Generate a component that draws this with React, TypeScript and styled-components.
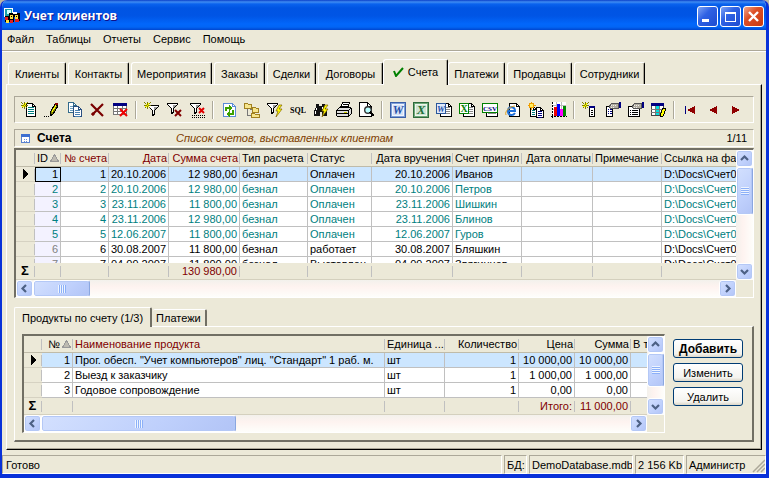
import React from 'react';
import styled, { createGlobalStyle, css } from 'styled-components';

const face = '#ece9d8';
const shade = '#aca899';
const dark = '#716f64';
const line = '#c0c0c0';
const maroon = '#800000';
const teal = '#008080';

const Global = createGlobalStyle`
  * { box-sizing: border-box; }
  body {
    margin: 0;
    background: #b9b5a4;
    font-family: "Liberation Sans", Arial, sans-serif;
    font-size: 11px;
    line-height: 14px;
    color: #000;
  }
  button { font: inherit; color: inherit; }
`;

const Window = styled.div`
  display: flex;
  flex-direction: column;
  min-height: 100vh;
  background: ${face};
  border: solid #0831d9;
  border-width: 0 3px 4px 2px;
  border-radius: 7px 7px 0 0;
  overflow: hidden;
`;

const TitleBar = styled.header`
  display: flex;
  align-items: center;
  gap: 4px;
  height: 30px;
  margin: 0 -3px 0 -2px;
  padding: 2px 5px 0 4px;
  background: linear-gradient(#0a3fc9 0, #3f8cf3 2px, #0a62ee 4px, #0054e3 8px, #0055e5 16px, #0267fb 24px, #0265f5 27px, #0046cf 30px);
`;

const Title = styled.h1`
  flex: 1;
  margin: 0;
  color: #fff;
  font: bold 12px/18px "Open Sans", "Noto Sans", sans-serif;
  text-shadow: 1px 1px 0 #0f1089;
`;

const Controls = styled.div`
  display: flex;
  gap: 2px;
`;

const ControlButton = styled.button<{ $close?: boolean }>`
  display: flex;
  width: 21px;
  height: 21px;
  padding: 0;
  border: 1px solid #fff;
  border-radius: 3px;
  background: ${p => (p.$close
    ? 'linear-gradient(135deg, #f0a58c, #dd4f26 40%, #c93a10)'
    : 'linear-gradient(135deg, #7fa4f5, #2f62e4 40%, #1d4bd0)')};
`;

const MenuBar = styled.nav`
  display: flex;
  gap: 12px;
  height: 22px;
  padding: 2px 5px 0;
  border-bottom: 1px solid #fff;
  box-shadow: inset 0 -1px ${shade};
`;

const MenuItem = styled.button`
  height: 14px;
  padding: 0;
  border: 0;
  background: none;
  font-size: 11px;
`;

const Tabs = styled.div`
  display: flex;
  align-items: flex-end;
  gap: 2px;
  height: 26px;
  margin: 6px 4px 0 6px;
`;

const Tab = styled.button<{ $w: number; $active?: boolean }>`
  display: flex;
  align-items: center;
  justify-content: center;
  gap: 4px;
  flex: 0 1 ${p => p.$w}px;
  height: 22px;
  padding: 0;
  white-space: nowrap;
  background: ${face};
  border: solid #fff;
  border-width: 1px 0 0 1px;
  border-radius: 3px 2px 0 0;
  border-right: 1px solid #000;
  box-shadow: inset -1px 0 ${shade};
  ${p => p.$active && css`
    position: relative;
    height: 26px;
    margin: 0 -2px -1px;
    padding-bottom: 2px;
  `}
`;

const MainPanel = styled.main`
  flex: 1;
  margin: 0 4px 5px;
  padding: 11px 7px 6px 7px;
  border: 1px solid #fff;
  border-right: 1px solid #000;
  border-bottom: 1px solid #000;
  box-shadow: inset -1px -1px ${shade};
`;

const Toolbar = styled.div`
  display: flex;
  align-items: center;
  height: 27px;
  margin-bottom: 6px;
  padding-left: 2px;
  border: 1px solid ${shade};
  border-right-color: #fff;
  border-bottom-color: #fff;
`;

const Tool = styled.button`
  display: flex;
  align-items: center;
  justify-content: center;
  width: 23px;
  height: 22px;
  padding: 0;
  border: 0;
  background: none;
`;

const Separator = styled.span`
  width: 8px;
  height: 18px;
  background: linear-gradient(90deg, ${shade} 50%, #fff 50%) center / 2px 100% no-repeat;
`;

const Caption = styled.div`
  display: flex;
  align-items: center;
  height: 18px;
  margin-bottom: 1px;
  padding: 0 6px;
  border: 1px solid ${shade};
  border-right-color: #fff;
  border-bottom-color: #fff;
`;

const CaptionTitle = styled.h2`
  display: flex;
  align-items: center;
  gap: 7px;
  width: 155px;
  margin: 0;
  font-size: 12px;
  line-height: 14px;
`;

const CaptionNote = styled.em`
  flex: 1;
  color: #804000;
`;

const GridFrame = styled.section`
  display: grid;
  grid-template-columns: minmax(0, 1fr) 17px;
  flex: 1;
  min-width: 0;
  border: 2px solid ${dark};
  border-right: 1px solid #fff;
  border-bottom: 1px solid #fff;
`;

const Viewport = styled.div<{ $h?: number }>`
  height: ${p => (p.$h ? `${p.$h}px` : 'auto')};
  overflow: hidden;
  border-bottom: 1px solid #d4d0be;
`;

const Table = styled.table`
  width: 100%;
  min-width: max-content;
  table-layout: fixed;
  border-spacing: 0;
`;

const Col = styled.col<{ $w?: number }>`
  width: ${p => (p.$w ? `${p.$w}px` : 'auto')};
`;

const cell = css<{ $right?: boolean }>`
  padding: 0 2px;
  font-weight: normal;
  text-align: ${p => (p.$right ? 'right' : 'left')};
  white-space: nowrap;
  overflow: hidden;
`;

const tick = css`
  background: linear-gradient(${line}, ${line}) right center / 1px 11px no-repeat ${face};
`;

const Head = styled.th<{ $right?: boolean; $red?: boolean }>`
  ${cell}
  ${tick}
  height: 17px;
  color: ${p => (p.$red ? maroon : '#000')};
  border-bottom: 1px solid #bfbba9;
  svg { margin-left: 2px; }
`;

const Row = styled.tr<{ $tone?: 'paid' | 'open'; $selected?: boolean }>`
  background: ${p => (p.$selected ? '#cce6ff' : '#fff')};
  color: ${p => (p.$tone === 'paid' ? teal : '#000')};
`;

const Cell = styled.td<{ $right?: boolean; $id?: 'current' | 'muted' | 'paid' }>`
  ${cell}
  height: 15px;
  border-right: 1px solid ${line};
  border-bottom: 1px solid ${line};
  ${p => p.$id && css`
    background: ${p.$id === 'current' ? '#cce6ff' : '#f3f2ff'};
    color: ${p.$id === 'muted' ? '#808080' : 'inherit'};
  `}
  ${p => p.$id === 'current' && css`
    outline: 1px solid #000;
    outline-offset: -1px;
  `}
`;

const Marker = styled.td`
  ${tick}
  height: 15px;
  padding: 0 0 0 7px;
  line-height: 0;
  border-bottom: 1px solid #d6d2c2;
`;

const Foot = styled.td<{ $right?: boolean }>`
  ${cell}
  ${tick}
  position: sticky;
  bottom: 0;
  height: 16px;
  padding-right: 3px;
  color: ${maroon};
`;

const Sigma = styled.strong`
  display: block;
  color: #000;
  font-size: 13px;
  text-align: center;
`;

const Bar = styled.div<{ $across?: boolean }>`
  display: flex;
  flex-direction: ${p => (p.$across ? 'row' : 'column')};
  min-width: 0;
  min-height: 0;
  height: ${p => (p.$across ? '17px' : 'auto')};
  background: linear-gradient(${p => (p.$across ? '180deg' : '90deg')}, #f3f1ec, #fef3f0 40%, #fefefb);
`;

const bevel = css`
  border: 1px solid #fff;
  border-radius: 3px;
  box-shadow: inset 0 0 0 1px #b4c8f6;
  background: linear-gradient(135deg, #d3e0fe, #bfd0fc 60%, #b2c4f6);
`;

const BarButton = styled.button`
  display: flex;
  align-items: center;
  justify-content: center;
  flex: 0 0 17px;
  padding: 0;
  ${bevel}
`;

const Thumb = styled.div<{ $size: number; $across?: boolean }>`
  display: flex;
  align-items: center;
  justify-content: center;
  flex: 0 0 ${p => p.$size}px;
  ${bevel}
  border-right-color: #8aa6e0;
  &::before {
    content: "";
    width: 8px;
    height: 8px;
    background: repeating-linear-gradient(${p => (p.$across ? '90deg' : '180deg')}, #eef4fe 0 1px, #8cb0f8 1px 2px);
  }
`;

const Spring = styled.span`
  flex: 1;
`;

const Corner = styled.div`
  background: ${face};
`;

const SubTabs = styled.div`
  display: flex;
  align-items: flex-end;
  gap: 1px;
  height: 19px;
  margin-top: 9px;
`;

const SubTab = styled.button<{ $active?: boolean }>`
  height: ${p => (p.$active ? 20 : 17)}px;
  margin-bottom: ${p => (p.$active ? -1 : 0)}px;
  padding: 0 ${p => (p.$active ? 7 : 4)}px 0 ${p => (p.$active ? 7 : 3)}px;
  position: relative;
  background: ${face};
  border: 1px solid #fff;
  border-bottom: 0;
  border-right: 2px solid ${dark};
  border-left-width: ${p => (p.$active ? 1 : 0)}px;
  border-radius: 2px 2px 0 0;
`;

const SubPanel = styled.div`
  display: flex;
  align-items: flex-start;
  gap: 8px;
  padding: 7px 9px 7px 7px;
  border: 1px solid #fff;
  border-right: 2px solid ${dark};
  border-bottom: 2px solid ${dark};
`;

const Actions = styled.div`
  display: flex;
  flex-direction: column;
  gap: 5px;
  width: 70px;
  padding-top: 5px;
`;

const Action = styled.button<{ $primary?: boolean }>`
  height: 19px;
  padding: 0;
  border: 1px solid #003c74;
  border-radius: 3px;
  background: linear-gradient(#fff, #f4f3ee 80%, #dcd6c8);
  font-size: ${p => (p.$primary ? 12 : 11)}px;
  font-weight: ${p => (p.$primary ? 'bold' : 'normal')};
`;

const Status = styled.footer`
  display: flex;
  gap: 2px;
  height: 19px;
`;

const StatusCell = styled.div<{ $w?: number }>`
  display: flex;
  align-items: center;
  justify-content: space-between;
  flex: ${p => (p.$w ? `0 0 ${p.$w}px` : '1')};
  padding-left: ${p => (p.$w ? 2 : 3)}px;
  white-space: nowrap;
  overflow: hidden;
  border: 1px solid ${shade};
  border-right-color: #fff;
  border-bottom-color: #fff;
`;

const Svg = ({ w = 16, h = 16, smooth, children }: { w?: number; h?: number; smooth?: boolean; children: React.ReactNode }) => (
  <svg width={w} height={h} viewBox={`0 0 ${w} ${h}`} fill="none" aria-hidden="true"
    shapeRendering={smooth ? 'auto' : 'crispEdges'}>{children}</svg>
);

/* Shared drawing pieces for the toolbar */
const Spark = () => (
  <>
    <path d="M3 0h1v7h-1z M0 3h7v1h-7z M1 1h1v1h-1z M5 1h1v1h-1z M1 5h1v1h-1z M5 5h1v1h-1z M0 0h1v1h-1z M6 0h1v1h-1z" fill="#808000" />
    <path d="M2 2h1v1h-1z M4 2h1v1h-1z M3 3h1v1h-1z M2 4h1v1h-1z M4 4h1v1h-1z M4 1h1v1h-1z M1 4h1v1h-1z" fill="#ff0" />
  </>
);
const Cross = ({ x = 0, y = 0, s = 7, c = '#800000' }) => (
  <path d={`M${x} ${y}l${s} ${s}M${x + s} ${y}l${-s} ${s}`} stroke={c} strokeWidth="2" shapeRendering="auto" />
);
const Funnel = ({ x = 0, y = 0 }) => (
  <g transform={`translate(${x} ${y})`}>
    <path d="M.5 .5h10v1l-4 4v4l-2 1v-5l-4-4z" fill="#fff" stroke="#000" />
    <path d="M6 2h3v1h-1v1h-1v1h-1z" fill="#999" />
  </g>
);
const Page = ({ x = 0, y = 0, w = 9, h = 12, ink = '#000', rule = '#008080', lines = 3 }) => (
  <g transform={`translate(${x} ${y})`}>
    <path d={`M.5 .5h${w - 3}l3 3v${h - 3}h-${w}z`} fill="#fff" stroke={ink} />
    <path d={`M${w - 2.5} .5v3h3`} stroke={ink} />
    {Array.from({ length: lines }, (_, i) => (
      <path key={i} d={`M2 ${4.5 + i * 2}h${w - 3}`} stroke={rule} />
    ))}
  </g>
);
const Bolt = () => <path d="M12 3h3l-3 4h3l-6 8 2-6h-2z" fill="#ff0" stroke="#806000" strokeWidth=".7" shapeRendering="auto" />;
const Letter = ({ x, y, size, fill, italic, children }: {
  x: number; y: number; size: number; fill: string; italic?: boolean; children: string;
}) => (
  <text x={x} y={y} fontSize={size} fontWeight="bold" fontStyle={italic ? 'italic' : 'normal'} fill={fill}
    textAnchor="middle" fontFamily="Liberation Serif, serif">{children}</text>
);
const Hand = () => (
  <>
    <path d="M4 5l3-4h6v5h-4l-3 1z" fill="#b0aca0" stroke="#555" />
    <path d="M6 3h5M6 5h4" stroke="#eee" strokeDasharray="1 1" />
    <path d="M14 0h2v6h-2z" fill="#000080" />
  </>
);

const icons: Record<string, React.ReactNode> = {
  'Новый': <Svg><Page x={5} y={1} w={9} h={13} lines={4} /><Spark /></Svg>,
  'Правка': (
    <Svg>
      <path d="M0 14h1v1h-1zM2 14h1v1h-1zM4 14h1v1h-1z" fill="#000" />
      <path d="M6 11l5-9 3 2-5 8-3 2z" fill="#808000" stroke="#000" />
      <path d="M8 10l4-7" stroke="#ff0" /><path d="M11 1h3v2h-3z" fill="#800000" />
    </Svg>
  ),
  'Копировать': (
    <Svg>
      <Page x={1} y={0} w={8} h={10} ink="#336b8c" rule="#6aa0c0" lines={3} />
      <Page x={6} y={4} w={8} h={10} ink="#2a4f80" rule="#4a80b0" lines={4} />
    </Svg>
  ),
  'Удалить': (
    <Svg smooth>
      <path d="M1 2l12 12M13 2L2 13" stroke="#7a0000" strokeWidth="2.2" />
      <path d="M2 13l2-2" stroke="#7a0000" strokeWidth="3" />
    </Svg>
  ),
  'Удалить все': (
    <Svg>
      <path d="M.5 1.5h13v11h-13z" fill="#fff" stroke="#777" /><path d="M0 1h14v3h-14z" fill="#000080" />
      <path d="M0 6.500h14M0 9.500h14M4.500 4v9M9.500 4v9" stroke="#777" />
      <Cross x={7} y={7} s={7} c="#f00000" />
    </Svg>
  ),
  'Фильтр': <Svg><Funnel x={4} y={3} /><Spark /></Svg>,
  'Снять фильтр': <Svg><Funnel y={1} /><Cross x={8} y={8} s={6} /></Svg>,
  'Снять все фильтры': (
    <Svg><Funnel y={1} /><Cross x={9} y={6} s={5} c="#e00000" /><path d="M2 13.500h13M2 15.500h13" stroke="#000" strokeDasharray="1 1" /></Svg>
  ),
  'Обновить': (
    <Svg>
      <path d="M2.500 1.500h9l3 3v10h-12z" fill="#fff" stroke="#5a8ad8" /><path d="M11.500 1.500v3h3" stroke="#5a8ad8" />
      <path d="M5 9V6h3M12 8v4H9" stroke="#3ca000" strokeWidth="2" />
      <path d="M8 3l4 3-4 3zM9 9l-4 3 4 3z" fill="#3ca000" />
    </Svg>
  ),
  'Дерево': (
    <Svg>
      <path d="M3.500 6v7h5M6 7.500h4" stroke="#777" />
      <path d="M.5 1.500h3l1 1h3v4h-7zM8.500 5.500h3l1 1h2v4h-6zM7.500 11.500h3l1 1h4v3h-8z" fill="#f6e58c" stroke="#a08020" />
    </Svg>
  ),
  'Быстрый фильтр': <Svg><Funnel y={1} /><Bolt /></Svg>,
  'SQL': <Svg smooth><Letter x={8} y={11} size={8} fill="#000">SQL</Letter></Svg>,
  'Поиск': (
    <Svg>
      <path d="M3 2h3v2h3v-2h3v3l2 4v5h-5v-4h-2v4h-6v-5l2-4z" fill="#111" />
      <path d="M3 6h1v2h-1zM2 9h1v3h-1zM9 5h1v2h-1z" fill="#fff" /><Bolt />
    </Svg>
  ),
  'Печать': (
    <Svg>
      <path d="M4.500 6l2-5.500h7l-2 5.500z" fill="#fff" stroke="#000" /><path d="M7 2.500h5M6 4.500h5" stroke="#000" />
      <path d="M.5 8.500l3-3h11l1 1v5l-3 3h-11l-1-1z" fill="#ddd" stroke="#000" />
      <path d="M1 8.500h11l3-2M1 11.500h11M12.500 8v6" stroke="#000" /><path d="M8 10h3v1h-3z" fill="#cc0" />
    </Svg>
  ),
  'Просмотр': (
    <Svg>
      <path d="M.5 .5h8l4 4v10h-12z" fill="#fff" stroke="#000" /><path d="M8.500 .5v4h4" stroke="#000" />
      <circle cx="9" cy="8" r="3.300" fill="#bff" stroke="#333" strokeWidth="1.400" shapeRendering="auto" />
      <path d="M11 10l4 4" stroke="#000" strokeWidth="2.400" />
    </Svg>
  ),
  'Word': (
    <Svg>
      <path d="M.5 .5h15v15h-15z" fill="#f0f5fe" stroke="#3a5fa8" /><path d="M1.500 1.500h13v13h-13z" stroke="#7fa0d8" />
      <path d="M3 3h10v10h-10z" fill="#d4e0f6" /><Letter x={8} y={12} size={12} fill="#2450a8" italic>W</Letter>
    </Svg>
  ),
  'Excel': (
    <Svg>
      <path d="M.5 .5h15v15h-15z" fill="#eef6ee" stroke="#2e6b3c" /><path d="M1.500 1.500h13v13h-13z" stroke="#6ea878" />
      <path d="M3 3h10v10h-10z" fill="#cfe4d2" /><Letter x={8} y={12} size={13} fill="#22703a" italic>X</Letter>
    </Svg>
  ),
  'Экспорт в Word': (
    <Svg>
      <Page x={4} y={1} w={11} h={13} rule="#888" lines={4} />
      <path d="M.5 1.500h9v10h-9z" fill="#dfe9fb" stroke="#2b579a" /><Letter x={5} y={10} size={9} fill="#2450a8" italic>W</Letter>
    </Svg>
  ),
  'Экспорт в Excel': (
    <Svg>
      <Page x={4} y={1} w={11} h={13} rule="#888" lines={4} />
      <path d="M.5 1.500h9v10h-9z" fill="#fff" stroke="#008000" /><Letter x={5} y={10} size={10} fill="#008000">X</Letter>
    </Svg>
  ),
  'Экспорт в CSV': (
    <Svg>
      <Page x={4} y={1} w={11} h={13} rule="#888" lines={4} />
      <path d="M.5 1.500h15v9h-15z" fill="#fff" stroke="#008000" />
      <Letter x={8} y={9} size={7} fill="#000080">CSV</Letter>
    </Svg>
  ),
  'Экспорт в HTML': (
    <Svg>
      <Page x={4} y={1} w={10} h={13} lines={0} />
      <path d="M2 9h8c0-5-7-5-7 0s5 5 7 2" stroke="#1e6fd8" strokeWidth="2" shapeRendering="auto" />
      <path d="M1 13C-1 9 6 4 10 4" stroke="#e0a020" shapeRendering="auto" />
    </Svg>
  ),
  'Новый отчет': (
    <Svg>
      <Page x={2} y={4} w={6} h={10} rule="#008080" lines={3} /><Page x={8} y={5} w={7} h={10} rule="#000080" lines={4} />
      <path d="M3 0h1v8h-1zM0 3h8v1h-8zM1 1h5v5h-5z" fill="#f0a000" /><path d="M2 2h3v3h-3z" fill="#ffef60" />
    </Svg>
  ),
  'Диаграмма': (
    <Svg>
      <path d="M1 0h14v13h-14z" fill="#fff" /><path d="M1 3.500h14M1 7.500h14M5.500 0v13M10.500 0v13" stroke="#bbb" />
      <path d="M3 5h3v9h-3z" fill="#e00" /><path d="M6 2h3v12h-3z" fill="#00f" />
      <path d="M9 7h3v7h-3z" fill="#f0f" /><path d="M12 4h3v10h-3z" fill="#080" />
      <path d="M1.500 0v15.500M0 14.500h16" stroke="#000" strokeDasharray="2 1" />
    </Svg>
  ),
  'Новое свойство': (
    <Svg><path d="M7.500 4.500h5v10h-5z" fill="#fff" stroke="#000" /><path d="M7 4h6v2h-6z" fill="#000080" /><path d="M9 8.500h2M9 10.500h2M9 12.500h2" stroke="#000" /><Spark /></Svg>
  ),
  'Свойства': (
    <Svg>
      <path d="M1.500 4.500h6v10h-6z" fill="#fff" stroke="#000" /><path d="M3 7.500h1M5 7.500h2M3 9.500h1M5 9.500h2M3 11.500h1M5 11.500h2" stroke="#000080" /><Hand />
    </Svg>
  ),
  'Свойства формы': (
    <Svg>
      <path d="M.5 4.500h11v10h-11z" fill="#fff" stroke="#000" /><path d="M2 8.500h1M4 8.500h6M2 10.500h1M4 10.500h6M2 12.500h1M4 12.500h6" stroke="#000" /><Hand />
    </Svg>
  ),
  'Правка таблицы': (
    <Svg>
      <path d="M.5 1.500h12v12h-12z" fill="#fff" stroke="#444" /><path d="M0 1h13v3h-13z" fill="#000080" />
      <path d="M5 4h4v9h-4z" fill="#0dd" /><path d="M0 7.500h13M0 10.500h13M4.500 4v9M8.500 4v9" stroke="#777" />
      <path d="M9 13l3-7 3 1-3 7-3 1z" fill="#ff0" stroke="#000" />
    </Svg>
  ),
  'Первая': <Svg w={12} h={8}><path d="M1 0h1v8h-1z" fill="#000080" /><path d="M3 4l8-4v8z" fill="#900000" /></Svg>,
  'Предыдущая': <Svg w={8} h={8}><path d="M0 4l8-4v8z" fill="#900000" /></Svg>,
  'Следующая': <Svg w={8} h={8}><path d="M8 4l-8-4v8z" fill="#900000" /></Svg>,
};

const toolGroups = [
  ['Новый', 'Правка', 'Копировать', 'Удалить', 'Удалить все'],
  ['Фильтр', 'Снять фильтр', 'Снять все фильтры'],
  ['Обновить', 'Дерево', 'Быстрый фильтр', 'SQL', 'Поиск', 'Печать', 'Просмотр'],
  ['Word', 'Excel', 'Экспорт в Word', 'Экспорт в Excel', 'Экспорт в CSV', 'Экспорт в HTML', 'Новый отчет', 'Диаграмма'],
  ['Новое свойство', 'Свойства', 'Свойства формы', 'Правка таблицы'],
  ['Первая', 'Предыдущая', 'Следующая'],
];

const AppIcon = () => (
  <Svg>
    <path d="M.5 .5h8v8h-8z" fill="#1b9ea8" stroke="#fff" /><path d="M3 2h4v4h-4z" fill="#cff" />
    <path d="M1 8h4v6h-4z" fill="#000" /><path d="M1 9h3v3h-3z" fill="#e02020" />
    <path d="M5 5h5v9h-5zM10 5h6v8h-5z" fill="#000" />
    <path d="M6 7h3v4h-3zM11 7h3v4h-3zM2 12h3v3h-3z" fill="#ffe040" />
    <path d="M7 8h1v1h-1zM12 8h1v1h-1z" fill="#000" /><path d="M6 12h3v3h-3zM11 11h4v3h-4z" fill="#e02020" />
    <path d="M9 4h4v2h-4z" fill="#fff" />
  </Svg>
);
const TableIcon = () => (
  <Svg w={9} h={9}>
    <path d="M.5 .5h8v8h-8z" fill="#fff" stroke="#5b83d0" /><path d="M0 0h9v3h-9z" fill="#3d6fd0" />
    <path d="M3 5h1v1h-1zM5 5h1v1h-1zM3 7h1v1h-1zM5 7h1v1h-1z" fill="#6b8fd8" />
  </Svg>
);
const Pointer = () => <Svg w={6} h={10}><path d="M0 0l6 5-6 5z" fill="#000" /></Svg>;
const SortMark = () => <Svg w={9} h={8}><path d="M4.500 .5l4 7h-8z" fill="#bdbab0" stroke="#999" /></Svg>;

const chevrons = { up: 'M1 6l3.500-3.500L8 6', down: 'M1 3l3.500 3.500L8 3', left: 'M6 1L2.500 4.500 6 8', right: 'M3 1l3.500 3.500L3 8' };
const labels = { up: 'Вверх', down: 'Вниз', left: 'Влево', right: 'Вправо' };
const ScrollButton = ({ dir }: { dir: keyof typeof chevrons }) => (
  <BarButton aria-label={labels[dir]}>
    <Svg w={9} h={9} smooth><path d={chevrons[dir]} stroke="#4d6185" strokeWidth="2.200" /></Svg>
  </BarButton>
);
const ScrollBar = ({ across, thumb }: { across?: boolean; thumb: number }) => (
  <Bar $across={across}>
    <ScrollButton dir={across ? 'left' : 'up'} />
    <Thumb $size={thumb} $across={across} />
    <Spring />
    <ScrollButton dir={across ? 'right' : 'down'} />
  </Bar>
);

type Column = { title: string; w?: number; right?: boolean; red?: boolean; sort?: boolean; total?: string };
type Line = { cells: string[]; tone?: 'paid' | 'open' };

const DataGrid = ({ columns, lines, height, marker, thumbs, frozen }: {
  columns: Column[]; lines: Line[]; height?: number; marker: number; thumbs: [number, number]; frozen?: boolean;
}) => (
  <GridFrame>
    <Viewport $h={height}>
      <Table>
        <colgroup>
          <Col $w={marker} />
          {columns.map(c => <Col key={c.title} $w={c.w} />)}
        </colgroup>
        <thead>
          <tr>
            <Head aria-label="Текущая строка" />
            {columns.map(c => (
              <Head key={c.title} scope="col" $right={c.right} $red={c.red}>
                {c.title}{c.sort && <SortMark />}
              </Head>
            ))}
          </tr>
        </thead>
        <tbody>
          {lines.map((l, r) => (
            <Row key={l.cells[0]} $tone={l.tone} $selected={r === 0}>
              <Marker>{r === 0 && <Pointer />}</Marker>
              {columns.map((c, i) => (
                <Cell key={c.title} $right={c.right}
                  $id={frozen && i === 0 ? (r === 0 ? 'current' : l.tone === 'paid' ? 'paid' : 'muted') : undefined}>
                  {l.cells[i]}
                </Cell>
              ))}
            </Row>
          ))}
        </tbody>
        <tfoot>
          <tr>
            <Foot><Sigma>Σ</Sigma></Foot>
            {columns.map(c => <Foot key={c.title} $right={c.right}>{c.total}</Foot>)}
          </tr>
        </tfoot>
      </Table>
    </Viewport>
    <ScrollBar thumb={thumbs[1]} />
    <ScrollBar across thumb={thumbs[0]} />
    <Corner />
  </GridFrame>
);

const invoiceColumns: Column[] = [
  { title: 'ID', w: 26, right: true, sort: true },
  { title: '№ счета', w: 48, right: true, red: true },
  { title: 'Дата', w: 60, right: true, red: true },
  { title: 'Сумма счета', w: 71, right: true, red: true, total: '130 980,00' },
  { title: 'Тип расчета', w: 68 },
  { title: 'Статус', w: 64 },
  { title: 'Дата вручения', w: 81, right: true },
  { title: 'Счет принял', w: 69 },
  { title: 'Дата оплаты', w: 71, right: true },
  { title: 'Примечание', w: 69 },
  { title: 'Ссылка на файл' },
];

const invoice = (n: number, date: string, sum: string, status: string, who: string, tone?: Line['tone']): Line => ({
  cells: [`${n}`, `${n}`, date, sum, 'безнал', status, date, who, '', '', 'D:\\Docs\\Счет01.doc'],
  tone,
});

const invoices: Line[] = [
  invoice(1, '20.10.2006', '12 980,00', 'Оплачен', 'Иванов'),
  invoice(2, '20.10.2006', '12 980,00', 'Оплачен', 'Петров', 'paid'),
  invoice(3, '23.11.2006', '11 800,00', 'Оплачен', 'Шишкин', 'paid'),
  invoice(4, '23.11.2006', '12 980,00', 'Оплачен', 'Блинов', 'paid'),
  invoice(5, '12.06.2007', '11 800,00', 'Оплачен', 'Гуров', 'paid'),
  invoice(6, '30.08.2007', '11 800,00', 'работает', 'Бляшкин'),
  invoice(7, '04.09.2007', '11 800,00', 'Выставлен', 'Звягинцев'),
];

const productColumns: Column[] = [
  { title: '№', w: 31, right: true, sort: true },
  { title: 'Наименование продукта', w: 312, red: true },
  { title: 'Единица ...', w: 60 },
  { title: 'Количество', w: 74, right: true },
  { title: 'Цена', w: 56, right: true, total: 'Итого:' },
  { title: 'Сумма', w: 56, right: true, total: '11 000,00' },
  { title: 'В т' },
];

const products: Line[] = [
  { cells: ['1', 'Прог. обесп. "Учет компьютеров" лиц. "Стандарт" 1 раб. м.', 'шт', '1', '10 000,00', '10 000,00', ''] },
  { cells: ['2', 'Выезд к заказчику', 'шт', '1', '1 000,00', '1 000,00', ''] },
  { cells: ['3', 'Годовое сопровождение', 'шт', '1', '0,00', '0,00', ''] },
];

const tabs: [string, number][] = [
  ['Клиенты', 58], ['Контакты', 61], ['Мероприятия', 81], ['Заказы', 51], ['Сделки', 49],
  ['Договоры', 65], ['Счета', 65], ['Платежи', 57], ['Продавцы', 65], ['Сотрудники', 71],
];

export default function App() {
  return (
    <Window>
      <Global />
      <TitleBar>
        <AppIcon />
        <Title>Учет клиентов</Title>
        <Controls>
          <ControlButton aria-label="Свернуть"><Svg w={19} h={19}><path d="M4 12h7v3h-7z" fill="#fff" /></Svg></ControlButton>
          <ControlButton aria-label="Развернуть"><Svg w={19} h={19}><path d="M4.500 5.500h10v9h-10zM4 5h11M4 6.500h11" stroke="#fff" /></Svg></ControlButton>
          <ControlButton aria-label="Закрыть" $close><Svg w={19} h={19} smooth><path d="M5 5l9 9M14 5l-9 9" stroke="#fff" strokeWidth="2.400" /></Svg></ControlButton>
        </Controls>
      </TitleBar>
      <MenuBar>
        {['Файл', 'Таблицы', 'Отчеты', 'Сервис', 'Помощь'].map(m => <MenuItem key={m}>{m}</MenuItem>)}
      </MenuBar>
      <Tabs role="tablist">
        {tabs.map(([name, w]) => (
          <Tab key={name} $w={w} $active={name === 'Счета'} role="tab" aria-selected={name === 'Счета'}>
            {name === 'Счета' && (
              <Svg w={11} h={10} smooth><path d="M1 4l2 5L10 1" stroke="#008000" strokeWidth="2" /></Svg>
            )}
            {name}
          </Tab>
        ))}
      </Tabs>
      <MainPanel>
        <Toolbar role="toolbar">
          {toolGroups.map((group, g) => (
            <React.Fragment key={group[0]}>
              {g > 0 && <Separator />}
              {group.map(name => <Tool key={name} aria-label={name}>{icons[name]}</Tool>)}
            </React.Fragment>
          ))}
        </Toolbar>
        <Caption>
          <CaptionTitle><TableIcon />Счета</CaptionTitle>
          <CaptionNote>Список счетов, выставленных клиентам</CaptionNote>
          <span>1/11</span>
        </Caption>
        <DataGrid columns={invoiceColumns} lines={invoices} height={130} marker={19} thumbs={[57, 48]} frozen />
        <SubTabs role="tablist">
          <SubTab role="tab" aria-selected $active>Продукты по счету (1/3)</SubTab>
          <SubTab role="tab" aria-selected={false}>Платежи</SubTab>
        </SubTabs>
        <SubPanel>
          <DataGrid columns={productColumns} lines={products} marker={18} thumbs={[195, 34]} />
          <Actions>
            <Action $primary>Добавить</Action>
            <Action>Изменить</Action>
            <Action>Удалить</Action>
          </Actions>
        </SubPanel>
      </MainPanel>
      <Status>
        <StatusCell>Готово</StatusCell>
        <StatusCell $w={23}>БД:</StatusCell>
        <StatusCell $w={104}>DemoDatabase.mdb</StatusCell>
        <StatusCell $w={49}>2 156 Kb</StatusCell>
        <StatusCell $w={80}>
          Администр
          <Svg w={13} h={17} smooth><path d="M1 16L13 4M5 16l8-8M9 16l4-4" stroke={shade} strokeWidth="1.500" /></Svg>
        </StatusCell>
      </Status>
    </Window>
  );
}
